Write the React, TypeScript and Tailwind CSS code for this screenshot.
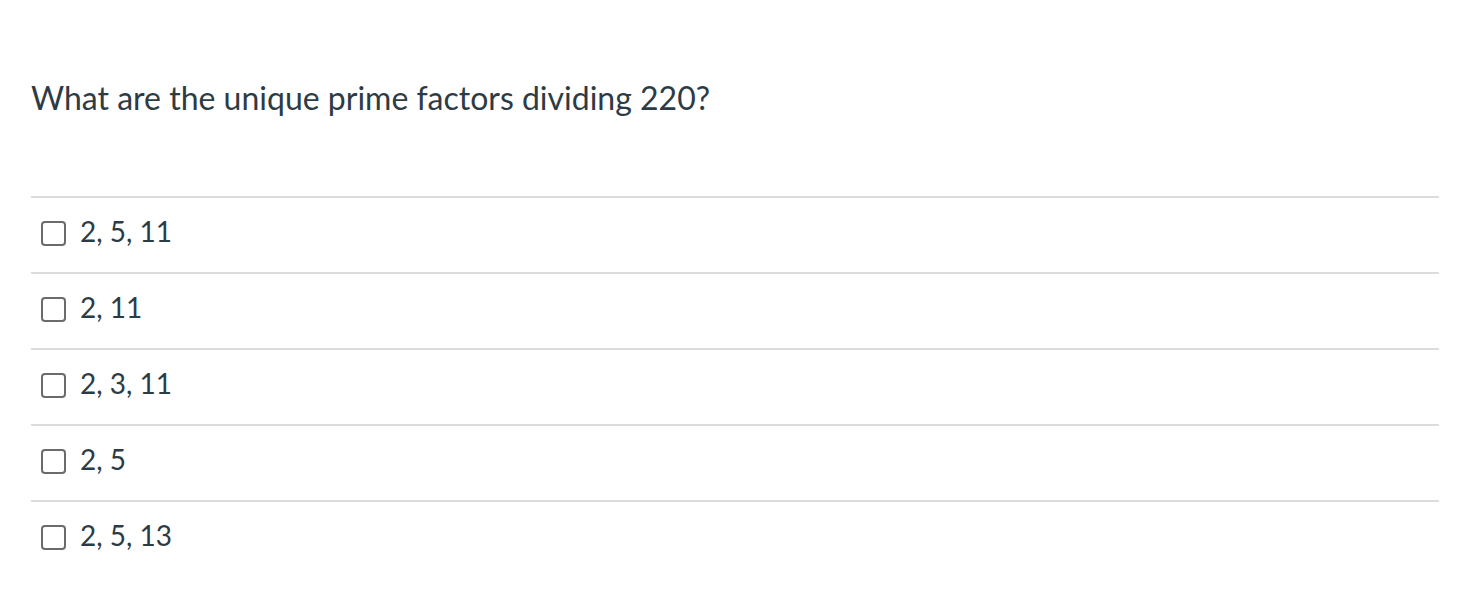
import React from "react";

const answers = ["2, 5, 11", "2, 11", "2, 3, 11", "2, 5", "2, 5, 13"];

export default function App() {
  return (
    <div className="min-h-[602px] w-[1468px] bg-white text-[#2d3b45]" style={{ fontFamily: "Lato, 'Liberation Sans', sans-serif" }}>
      <div className="pl-[31px] pr-[29px] pt-[76px]">
        <div className="text-[32px] leading-[44px]">What are the unique prime factors dividing 220?</div>
        <div className="mt-[76px]">
          {answers.map((a) => (
            <div key={a} className="flex h-[76px] items-center border-t-2 border-[#dcdcdc] pb-[4px]">
              <div className="ml-[10px] h-[25px] w-[25px] rounded-[4px] border-2 border-[#6b6b6b] bg-white" />
              <span className="mb-[4px] ml-[14px] text-[28px] leading-[28px]">{a}</span>
            </div>
          ))}
        </div>
      </div>
    </div>
  );
}
